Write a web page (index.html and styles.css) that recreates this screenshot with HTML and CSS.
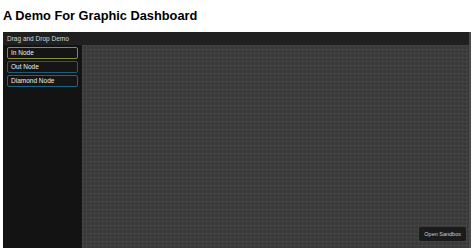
FILE: index.html
```html
<!DOCTYPE html>
<html>
<head>
<meta charset="utf-8">
<link rel="stylesheet" href="styles.css">
</head>
<body>
<h1 class="title">A Demo For Graphic Dashboard</h1>
<div class="app">
  <div class="app-header">Drag and Drop Demo</div>
  <div class="app-body">
    <aside class="sidebar">
      <div class="node node-in">In Node</div>
      <div class="node node-out">Out Node</div>
      <div class="node node-diamond">Diamond Node</div>
    </aside>
    <main class="canvas">
      <button class="sandbox-btn">Open Sandbox</button>
    </main>
  </div>
</div>
</body>
</html>
```
FILE: styles.css
```css
html, body {
  margin: 0;
  padding: 0;
  background: #ffffff;
  font-family: "Liberation Sans", Arial, sans-serif;
  overflow: hidden;
}
body {
  padding: 0 3px;
  height: 248px;
  display: flex;
  flex-direction: column;
}
.title {
  margin: 0;
  padding-top: 8px;
  height: 32px;
  box-sizing: border-box;
  font-size: 12.8px;
  font-weight: bold;
  color: #000;
  line-height: 16px;
}
.app {
  flex: 1;
  display: flex;
  flex-direction: column;
  background: #141414;
  border-right: 2px solid #4a4a4a;
}
.app-header {
  height: 13px;
  background: #202020;
  color: #d8d8d8;
  font-size: 6.5px;
  line-height: 13px;
  padding-left: 4px;
}
.app-body {
  flex: 1;
  display: flex;
}
.sidebar {
  width: 79px;
  background: #131313;
  padding: 2px 4px;
  box-sizing: border-box;
  display: flex;
  flex-direction: column;
  gap: 2px;
}
.node {
  height: 10px;
  border: 1px solid #666;
  border-radius: 2px;
  color: #f0f0f0;
  font-size: 6.5px;
  line-height: 10px;
  padding-left: 3px;
  background: #151515;
}
.node-in { border-color: #84932c; }
.node-out { border-color: #1c5d7c; }
.node-diamond { border-color: #1f6686; }
.canvas {
  flex: 1;
  position: relative;
  background-color: #393939;
  background-image:
    linear-gradient(to right, rgba(70,70,70,0.7) 1px, transparent 1px),
    linear-gradient(to bottom, rgba(70,70,70,0.7) 1px, transparent 1px);
  background-size: 4px 4px;
}
.sandbox-btn {
  position: absolute;
  right: 3px;
  bottom: 7px;
  height: 14px;
  padding: 0 5px;
  border: none;
  border-radius: 2px;
  background: #1b1b1b;
  color: #cfcfcf;
  font-family: "Liberation Sans", Arial, sans-serif;
  font-size: 5.5px;
  line-height: 14px;
}
```
